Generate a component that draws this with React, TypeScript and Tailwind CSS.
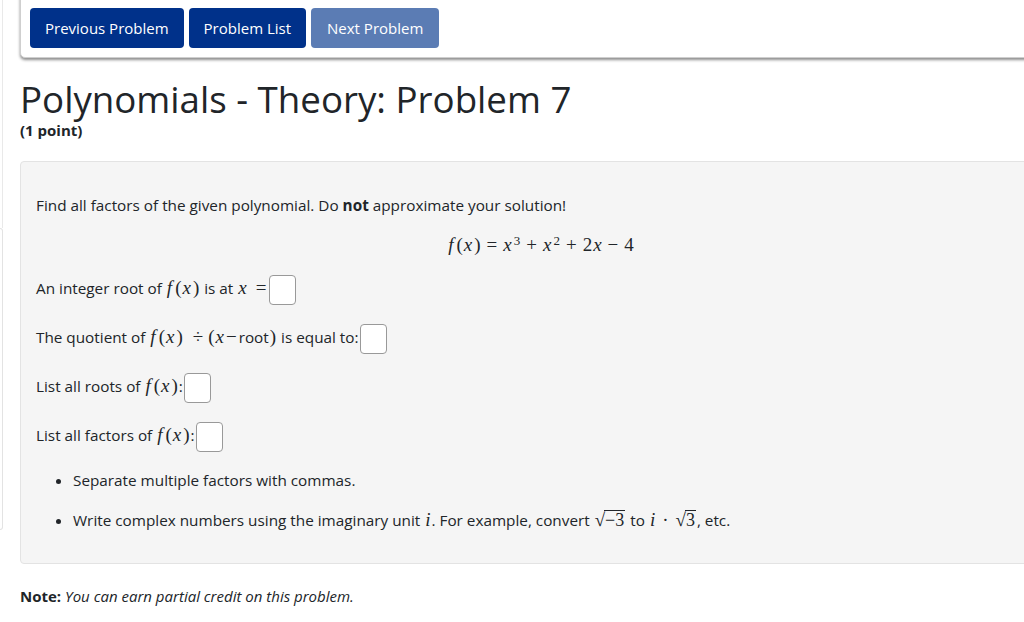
import React from 'react'

const mathFont = { fontFamily: '"Liberation Serif", "DejaVu Serif", serif' }

function M({ children }: { children: React.ReactNode }) {
  return (
    <span className="text-[19px] leading-none italic" style={mathFont}>
      {children}
    </span>
  )
}

function Up({ children, className = '' }: { children: React.ReactNode; className?: string }) {
  return <span className={`not-italic ${className}`}>{children}</span>
}

function Op({ children }: { children: React.ReactNode }) {
  return <span className="not-italic mx-[6px]">{children}</span>
}

function Fx() {
  return (
    <M>
      <span className="ml-[1px]">f</span>
      <Up className="ml-[3px] mr-[1px]">(</Up>x<Up className="ml-[2px] mr-[1px]">)</Up>
    </M>
  )
}

function AnswerBox() {
  return (
    <span className="inline-block align-middle w-[27px] h-[30px] bg-white border border-[#999] rounded-[4px] mx-[1px]" />
  )
}

function Sqrt({ children }: { children: React.ReactNode }) {
  return (
    <span className="inline-flex items-end text-[18px] not-italic leading-none mx-[1px]" style={mathFont}>
      <span className="text-[19px] leading-none -mr-[1px]">√</span>
      <span className="border-t border-[#212529] leading-[17px] pt-[1px] px-[1px]">{children}</span>
    </span>
  )
}

export default function App() {
  return (
    <div
      className="w-[1024px] h-[622px] overflow-hidden bg-white flex text-[#212529]"
      style={{ fontFamily: '"Open Sans", "Noto Sans", sans-serif' }}
    >
      {/* cut-off sidebar edge */}
      <div className="w-[3px] shrink-0 flex flex-col">
        <div className="h-[228px] border-r border-[#e9e9e9]" />
        <div className="h-[302px] border-r border-y border-[#e3e3e3] rounded-r-[4px]" />
      </div>

      <div className="w-[1060px] shrink-0 pl-[17px]">
        {/* nav card */}
        <div className="-mt-[10px] border border-[#cfcfcf] rounded-[5px] shadow-[0_2px_3px_rgba(0,0,0,0.45)] pt-[17px] pb-[9px] px-[9px] flex gap-[5px] bg-white">
          <button className="h-[40px] px-[15px] rounded-[4px] bg-[#00318a] text-white text-[15px]">
            Previous Problem
          </button>
          <button className="h-[40px] px-[15px] rounded-[4px] bg-[#00318a] text-white text-[15px]">
            Problem List
          </button>
          <button className="h-[40px] px-[16px] rounded-[4px] bg-[#5b7cb4] text-white text-[15px]">
            Next Problem
          </button>
        </div>

        <h1 className="mt-[20px] text-[36.7px] leading-[42px]">Polynomials - Theory: Problem 7</h1>
        <p className="text-[15px] font-bold leading-[20px]">(1 point)</p>

        <div className="mt-[21px] h-[403px] bg-[#f5f5f5] border border-[#e3e3e3] rounded-[4px] pl-[15px] pr-[16px] pt-[31px] text-[15.3px]">
          <p className="leading-[24px]">
            Find all factors of the given polynomial. Do <b>not</b> approximate your solution!
          </p>
          <div className="mt-[16px] text-center leading-[24px]">
            <M>
              <span>f</span>
              <Up className="ml-[3px] mr-[1px]">(</Up>x<Up className="ml-[2px]">)</Up>
              <Op>=</Op>x<sup className="not-italic text-[13px] ml-[2px]">3</sup>
              <Op>+</Op>x<sup className="not-italic text-[13px] ml-[2px]">2</sup>
              <Op>+</Op>
              <Up className="mr-[1px]">2</Up>x<Op>−</Op>
              <Up>4</Up>
            </M>
          </div>

          <p className="mt-[16px] leading-[30px]">
            An integer root of <Fx /> is at <M><span className="mx-[1px]">x</span></M>{' '}
            <M>
              <Up className="ml-[4px] mr-[2px]">=</Up>
            </M>
            <AnswerBox />
          </p>
          <p className="mt-[17px] leading-[30px]">
            The quotient of <Fx />{' '}
            <M>
              <Up className="mx-[5px]">÷</Up>
              <Up className="mr-[1px]">(</Up>x<Up className="mx-[2px]">−</Up>
            </M>
            root
            <M>
              <Up className="ml-[1px] mr-[1px]">)</Up>
            </M>{' '}
            is equal to:
            <AnswerBox />
          </p>
          <p className="mt-[17px] leading-[30px]">
            List all roots of <Fx />:
            <AnswerBox />
          </p>
          <p className="mt-[17px] leading-[30px]">
            List all factors of <Fx />:
            <AnswerBox />
          </p>

          <ul className="mt-[16px] pl-[37px] list-disc">
            <li className="leading-[24px]">Separate multiple factors with commas.</li>
            <li className="mt-[16px] leading-[24px]">
              Write complex numbers using the imaginary unit <M><span className="mx-[1px]">i</span></M>. For example, convert{' '}
              <Sqrt>−3</Sqrt> to <M><span className="mx-[1px]">i</span></M>{' '}
              <M>
                <Up className="mx-[2px]">·</Up>
              </M>{' '}
              <Sqrt>3</Sqrt>, etc.
            </li>
          </ul>
        </div>

        <p className="mt-[20px] text-[15px] leading-[24px]">
          <b>Note:</b> <i>You can earn partial credit on this problem.</i>
        </p>
      </div>
    </div>
  )
}
